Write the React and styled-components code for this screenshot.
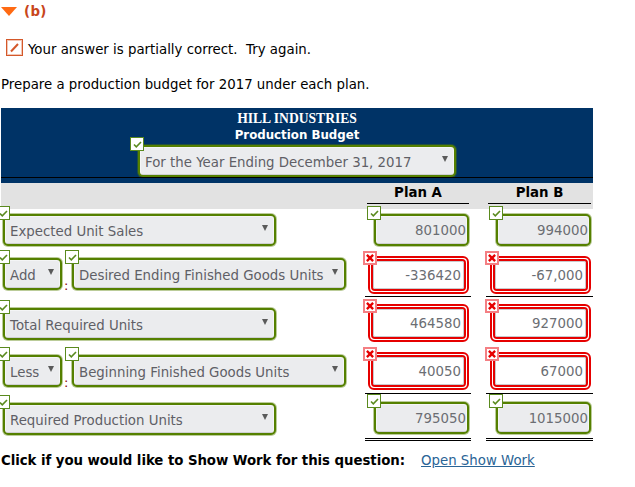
import React from 'react';
import styled, { createGlobalStyle } from 'styled-components';

const Global = createGlobalStyle`
  html, body { margin: 0; padding: 0; background: #fff; }
  body { font-family: "DejaVu Sans", Verdana, sans-serif; font-size: 13.33px; color: #000; width: 635px; height: 487px; overflow: hidden; }
`;

const Page = styled.div`
  display: flex;
  flex-direction: column;
  padding-left: 1px;
`;

const PartHeading = styled.div`
  display: flex;
  align-items: center;
  gap: 7px;
  height: 23px;
  margin-bottom: 1px;
  color: #c8461b;
  font-weight: bold;
  font-size: 13.33px;
  letter-spacing: 0.3px;
`;

const Feedback = styled.div`
  display: flex;
  align-items: center;
  gap: 5px;
  height: 20px;
  margin: 15px 0 0 5px;
  white-space: pre;
`;

const EditBox = styled.span`
  display: flex;
  width: 15px;
  height: 15px;
  margin-top: -3px;
  border: 1px solid #d4582a;
  background: #fff;
  align-items: center;
  justify-content: center;
  box-shadow: inset 0 0 0 1px #f2c6b4;
`;

const Prompt = styled.p`
  margin: 15px 0 0;
  height: 20px;
  line-height: 22px;
`;

const Table = styled.div`
  width: 592px;
  margin-top: 14px;
`;

const Banner = styled.div`
  height: 75px;
  background: #003366;
  display: flex;
  flex-direction: column;
  align-items: center;
  position: relative;
`;

const Title = styled.div`
  color: #fff;
  text-align: center;
  padding-top: 3px;
  height: 34px;
`;

const TitleTop = styled.div`
  font-family: "Liberation Serif", serif;
  font-weight: bold;
  font-size: 13.6px;
  line-height: 16px;
`;

const TitleBottom = styled.div`
  font-family: "DejaVu Sans", sans-serif;
  font-weight: bold;
  font-size: 11.8px;
  line-height: 16px;
`;

const BannerRule = styled.div`
  width: 100%;
  height: 1px;
  background: #000;
  position: absolute;
  top: 69px;
`;

const ColumnBar = styled.div`
  height: 26px;
  background: #e2e2e2;
  display: grid;
  grid-template-columns: 366px 102px 19px 103px;
`;

const ColumnName = styled.div`
  grid-column: ${p => p.$col};
  height: 20px;
  line-height: 20px;
  text-align: center;
  font-weight: bold;
  border-bottom: 1px solid #000;
`;

const Row = styled.div`
  display: grid;
  grid-template-columns: 364px 106px 15px 107px;
  height: ${p => p.$h}px;
`;

const LabelCell = styled.div`
  display: flex;
  align-items: flex-start;
  padding: ${p => p.$top}px 0 0 2px;
`;

const Colon = styled.span`
  width: 10px;
  padding-left: 2px;
  box-sizing: border-box;
  align-self: flex-end;
  line-height: 11px;
  color: #8b0000;
  font-size: 13px;
  margin-bottom: ${p => p.$mb}px;
`;

const AmountCell = styled.div`
  grid-column: ${p => p.$col};
  display: flex;
  justify-content: flex-end;
  padding: ${p => p.$top}px 2px 0 0;
  height: 100%;
  box-sizing: border-box;
  border-bottom: ${p => (p.$rule === 'single' ? '1px solid #000' : p.$rule === 'double' ? '3px double #000' : 'none')};
`;

const Marked = styled.div`
  position: relative;
  flex: none;
`;

const Badge = styled.span`
  position: absolute;
  left: ${p => p.$left}px;
  top: ${p => p.$top}px;
  width: 14px;
  height: 14px;
  box-sizing: border-box;
  background: #fff;
  border: ${p => (p.$bad ? '2px solid #f47f83' : '1px solid #5a8a1e')};
  display: flex;
  align-items: center;
  justify-content: center;
  z-index: 2;
`;

const Select = styled.div`
  width: ${p => p.$w}px;
  height: 32px;
  box-sizing: border-box;
  border: 2px solid #558000;
  border-radius: 5px;
  background: #ebecee;
  box-shadow: 0 0 0 1px rgba(85, 128, 0, 0.4), inset 0 -2px 0 -1px #cfd0d3, inset 0 0 0 1px #f4f5f6;
  color: #5f5f66;
  display: flex;
  align-items: center;
  justify-content: space-between;
  padding: 2px 6px 0 5px;
  white-space: nowrap;
`;

const Arrow = styled.span`
  width: 0;
  height: 0;
  flex: none;
  margin-top: -6px;
  border-left: 3.5px solid transparent;
  border-right: 3.5px solid transparent;
  border-top: 6px solid #5a5a5a;
`;

const GoodInput = styled.div`
  width: 95px;
  height: 32px;
  box-sizing: border-box;
  border: 2px solid #558000;
  border-radius: 5px;
  background: #ebecee;
  box-shadow: 0 0 0 1px rgba(85, 128, 0, 0.4), inset 0 -2px 0 -1px #cfd0d3, inset 0 0 0 1px #f4f5f6;
  color: #6b6e73;
  text-align: right;
  line-height: 30px;
  padding-right: 1px;
`;

const BadInput = styled.div`
  width: 101px;
  height: 38px;
  box-sizing: border-box;
  border: 2px solid #e60000;
  border-radius: 6px;
  padding: 1px;
  background: #fff;
`;

const BadInner = styled.div`
  height: 100%;
  box-sizing: border-box;
  border: 2px solid #e60000;
  border-radius: 4px;
`;

const BadField = styled.div`
  height: 100%;
  box-sizing: border-box;
  border: 1px solid #c9cacd;
  border-radius: 2px;
  background: #fff;
  color: #6b6e73;
  text-align: right;
  line-height: 27px;
  padding-right: 2px;
`;

const Footer = styled.div`
  display: flex;
  align-items: baseline;
  margin-top: 10px;
  height: 20px;
  line-height: 20px;
`;

const FooterText = styled.strong`
  font-weight: bold;
  width: 420px;
  letter-spacing: -0.06px;
`;

const OpenLink = styled.a`
  color: #2a6496;
  text-decoration: underline;
`;

const Check = () => (
  <svg width="9" height="7" viewBox="0 0 9 7"><path d="M1 3.5 L3.3 5.8 L8 1" fill="none" stroke="#5a8a1e" strokeWidth="1.6" /></svg>
);

const Cross = () => (
  <svg width="8" height="8" viewBox="0 0 9 9"><path d="M1 1 L8 8 M8 1 L1 8" fill="none" stroke="#e60000" strokeWidth="2.6" /></svg>
);

const Choice = ({ w, label, left = -7, top = -8 }) => (
  <Marked>
    <Badge $left={left} $top={top}><Check /></Badge>
    <Select $w={w}><span>{label}</span><Arrow /></Select>
  </Marked>
);

const Good = ({ value }) => (
  <Marked>
    <Badge $left={-7} $top={-8}><Check /></Badge>
    <GoodInput>{value}</GoodInput>
  </Marked>
);

const Bad = ({ value }) => (
  <Marked>
    <Badge $bad $left={-5} $top={-5}><Cross /></Badge>
    <BadInput><BadInner><BadField>{value}</BadField></BadInner></BadInput>
  </Marked>
);

const rows = [
  { h: 41, top: 5, left: [{ w: 273, label: 'Expected Unit Sales' }], a: ['good', '801000'], b: ['good', '994000'], itop: 5 },
  { h: 47, top: 8, left: [{ w: 59, label: 'Add' }, { w: 274, label: 'Desired Ending Finished Goods Units' }], a: ['bad', '-336420'], b: ['bad', '-67,000'], itop: 6, rule: 'single' },
  { h: 48, top: 11, left: [{ w: 273, label: 'Total Required Units' }], a: ['bad', '464580'], b: ['bad', '927000'], itop: 7 },
  { h: 49, top: 10, left: [{ w: 59, label: 'Less' }, { w: 274, label: 'Beginning Finished Goods Units' }], a: ['bad', '40050'], b: ['bad', '67000'], itop: 7, rule: 'single' },
  { h: 47, top: 9, left: [{ w: 273, label: 'Required Production Units' }], a: ['good', '795050'], b: ['good', '1015000'], itop: 8, rule: 'double' },
];

const Amount = ({ spec }) => (spec[0] === 'good' ? <Good value={spec[1]} /> : <Bad value={spec[1]} />);

export default function App() {
  return (
    <Page>
      <Global />
      <PartHeading>
        <svg width="16" height="9" viewBox="0 0 16 9"><path d="M0 0 H16 L8 9 Z" fill="#ff6a13" /></svg>
        (b)
      </PartHeading>
      <Feedback>
        <EditBox>
          <svg width="11" height="11" viewBox="0 0 11 11"><path d="M2 9.5 L9 2" fill="none" stroke="#d4582a" strokeWidth="2" /></svg>
        </EditBox>
        {'Your answer is partially correct.  Try again.'}
      </Feedback>
      <Prompt>Prepare a production budget for 2017 under each plan.</Prompt>
      <Table>
        <Banner>
          <Title>
            <TitleTop>HILL INDUSTRIES</TitleTop>
            <TitleBottom>Production Budget</TitleBottom>
          </Title>
          <Choice w={318} label="For the Year Ending December 31, 2017" left={-8} top={-8} />
          <BannerRule />
        </Banner>
        <ColumnBar>
          <ColumnName $col={2}>Plan A</ColumnName>
          <ColumnName $col={4}>Plan B</ColumnName>
        </ColumnBar>
        {rows.map((r, i) => (
          <Row key={i} $h={r.h}>
            <LabelCell $top={r.top}>
              {r.left.map((c, j) => (
                <React.Fragment key={c.label}>
                  {j === 1 && <Colon $mb={r.h - r.top - 32 - 1}>:</Colon>}
                  <Choice {...c} />
                </React.Fragment>
              ))}
            </LabelCell>
            <AmountCell $col={2} $top={r.itop} $rule={r.rule}><Amount spec={r.a} /></AmountCell>
            <AmountCell $col={4} $top={r.itop} $rule={r.rule}><Amount spec={r.b} /></AmountCell>
          </Row>
        ))}
      </Table>
      <Footer>
        <FooterText>Click if you would like to Show Work for this question:</FooterText>
        <OpenLink href="#">Open Show Work</OpenLink>
      </Footer>
    </Page>
  );
}
